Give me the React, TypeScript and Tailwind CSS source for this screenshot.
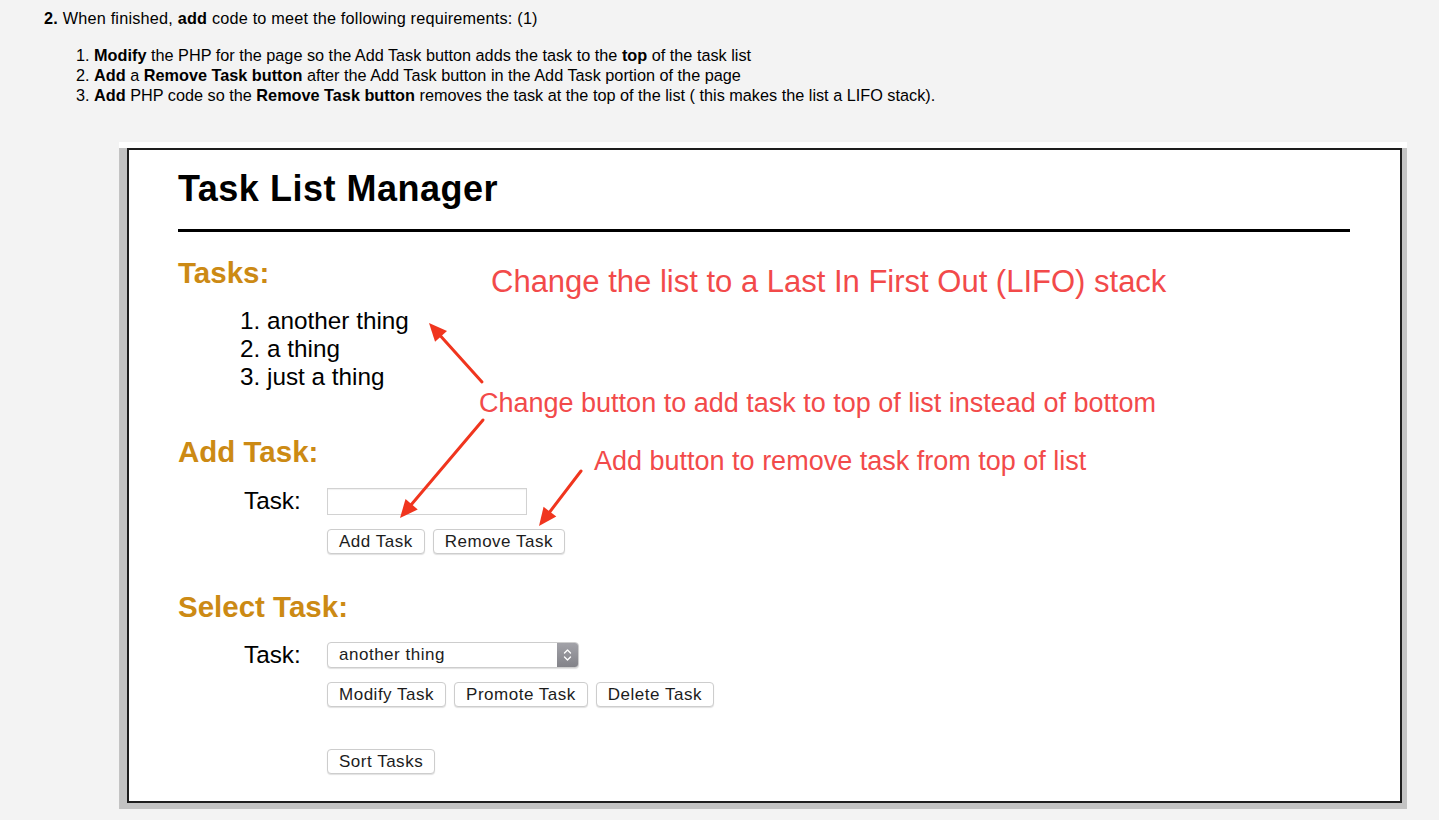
import React from 'react'

const tasks = ['another thing', 'a thing', 'just a thing']

function Arrow({ x1, y1, x2, y2 }: { x1: number; y1: number; x2: number; y2: number }) {
  // tail (x1,y1) to tip (x2,y2), filled head at the tip
  const dx = x2 - x1
  const dy = y2 - y1
  const len = Math.hypot(dx, dy)
  const ux = dx / len
  const uy = dy / len
  const head = 18
  const half = 8
  const bx = x2 - ux * head
  const by = y2 - uy * head
  const pts = `${x2},${y2} ${bx - uy * half},${by + ux * half} ${bx + uy * half},${by - ux * half}`
  return (
    <g>
      <line x1={x1} y1={y1} x2={bx + ux * 2} y2={by + uy * 2} stroke="#f0351e" strokeWidth="3" strokeLinecap="round" />
      <polygon points={pts} fill="#f0351e" />
    </g>
  )
}

function Btn({ children }: { children: React.ReactNode }) {
  return (
    <button className="h-[25px] rounded-[4px] border border-[#cdcdcd] bg-white px-[11px] text-[17px] leading-none tracking-[0.03em] text-[#1c1c1c] shadow-[0_1px_1px_rgba(0,0,0,0.12)]">
      {children}
    </button>
  )
}

export default function App() {
  return (
    <div className="relative min-h-[820px] w-[1439px] overflow-hidden bg-[#f3f3f3] font-['Liberation_Sans',Arial,sans-serif] text-black">
      <p className="pl-[44px] pt-[8px] text-[16.25px] leading-[20px] tracking-[0.2px]">
        <b>2.</b> When finished, <b>add</b> code to meet the following requirements: (1)
      </p>
      <ol className="mt-[17px] pl-[76px] text-[16.25px] leading-[20px]">
        <li>
          1. <b>Modify</b> the PHP for the page so the Add Task button adds the task to the <b>top</b> of the task list
        </li>
        <li>
          2. <b>Add</b> a <b>Remove Task button</b> after the Add Task button in the Add Task portion of the page
        </li>
        <li>
          3. <b>Add</b> PHP code so the <b>Remove Task button</b> removes the task at the top of the list ( this makes the list a LIFO stack).
        </li>
      </ol>

      <div className="ml-[119px] mt-[37px] w-[1288px] border-t-[6px] border-white bg-[#c3c3c3] pb-[6px] pl-[8px] pr-[5px]">
        <div className="relative border-2 border-[#1e1e1e] bg-white pb-[27px] pl-[49px] pr-[50px] pt-[19px]">
          <h1 className="text-[36px] font-bold leading-[40px] tracking-[0.5px]">Task List Manager</h1>
          <div className="mt-[20px] h-[3px] bg-black" />

          <h2 className="mt-[25px] text-[29.5px] font-bold leading-[32px] text-[#cc8a14]">Tasks:</h2>
          <ol className="mt-[18px] pl-[62px] text-[24.3px] leading-[28px]">
            {tasks.map((t, i) => (
              <li key={t}>
                {i + 1}. {t}
              </li>
            ))}
          </ol>

          <h2 className="mt-[45px] text-[29.5px] font-bold leading-[32px] text-[#cc8a14]">Add Task:</h2>
          <div className="mt-[19px] flex items-center pl-[66px]">
            <span className="w-[83px] text-[24.3px] leading-[28px]">Task:</span>
            <input className="h-[27px] w-[200px] border border-[#d2d2d2] bg-white shadow-[inset_0_1px_1px_rgba(0,0,0,0.06)] outline-none" />
          </div>
          <div className="mt-[14px] flex gap-[8px] pl-[149px]">
            <Btn>Add Task</Btn>
            <Btn>Remove Task</Btn>
          </div>

          <h2 className="mt-[37px] text-[29.5px] font-bold leading-[32px] text-[#cc8a14]">Select Task:</h2>
          <div className="mt-[18px] flex items-center pl-[66px]">
            <span className="w-[83px] text-[24.3px] leading-[28px]">Task:</span>
            <div className="flex h-[26px] w-[252px] items-stretch overflow-hidden rounded-[4px] border border-[#cdcdcd] bg-white shadow-[0_1px_1px_rgba(0,0,0,0.12)]">
              <span className="flex flex-1 items-center pl-[11px] text-[17px] tracking-[0.03em] text-[#1c1c1c]">
                another thing
              </span>
              <span className="flex w-[21px] items-center justify-center bg-gradient-to-b from-[#a2a2a8] to-[#838389]">
                <svg width="9" height="14" viewBox="0 0 9 14" fill="none">
                  <path d="M1.5 5L4.5 2L7.5 5" stroke="white" strokeWidth="1.4" strokeLinecap="round" strokeLinejoin="round" />
                  <path d="M1.5 9L4.5 12L7.5 9" stroke="white" strokeWidth="1.4" strokeLinecap="round" strokeLinejoin="round" />
                </svg>
              </span>
            </div>
          </div>
          <div className="mt-[13px] flex gap-[8px] pl-[149px]">
            <Btn>Modify Task</Btn>
            <Btn>Promote Task</Btn>
            <Btn>Delete Task</Btn>
          </div>
          <div className="mt-[42px] pl-[149px]">
            <Btn>Sort Tasks</Btn>
          </div>

          <p className="absolute left-[362px] top-[116px] whitespace-nowrap text-[31px] leading-[31px] text-[#f24a4a]">
            Change the list to a Last In First Out (LIFO) stack
          </p>
          <p className="absolute left-[350px] top-[240px] whitespace-nowrap text-[27px] leading-[27px] text-[#f24a4a]">
            Change button to add task to top of list instead of bottom
          </p>
          <p className="absolute left-[465px] top-[298px] whitespace-nowrap text-[27px] leading-[27px] text-[#f24a4a]">
            Add button to remove task from top of list
          </p>
        </div>
      </div>

      <svg className="pointer-events-none absolute left-0 top-0" width="1439" height="820">
        <Arrow x1={482} y1={382} x2={429} y2={323} />
        <Arrow x1={483} y1={420} x2={400} y2={518} />
        <Arrow x1={581} y1={471} x2={539} y2={526} />
      </svg>
    </div>
  )
}
